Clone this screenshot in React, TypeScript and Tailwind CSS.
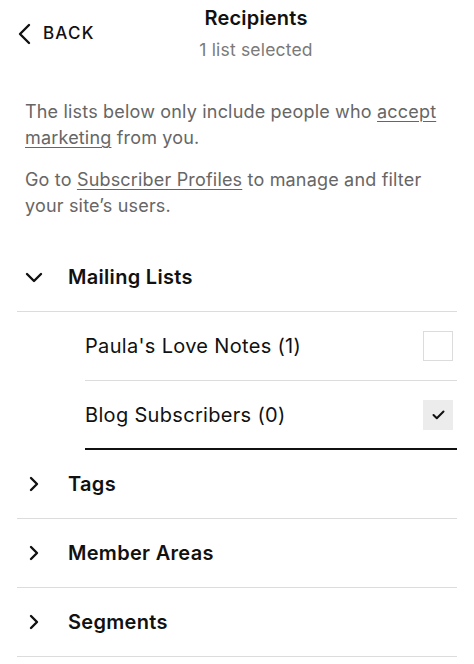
import { useState } from "react";

type Section = { title: string; open?: boolean };

const sections: Section[] = [
  { title: "Mailing Lists", open: true },
  { title: "Tags" },
  { title: "Member Areas" },
  { title: "Segments" },
];

const initialLists = [
  { name: "Paula's Love Notes (1)", checked: false },
  { name: "Blog Subscribers (0)", checked: true },
];

function Chevron({ dir }: { dir: "left" | "right" | "down" }) {
  if (dir === "left") {
    return (
      <svg width="15" height="22" viewBox="0 0 15 22" fill="none" stroke="#111" strokeWidth="2.4" strokeLinecap="round" strokeLinejoin="round">
        <path d="M12 2 L3 11 L12 20" />
      </svg>
    );
  }
  if (dir === "down") {
    return (
      <svg width="18" height="11" viewBox="0 0 18 11" fill="none" stroke="#111" strokeWidth="2.4" strokeLinecap="round" strokeLinejoin="round">
        <path d="M2 2 L9 9 L16 2" />
      </svg>
    );
  }
  return (
    <svg width="12" height="16" viewBox="0 0 12 16" fill="none" stroke="#111" strokeWidth="2.4" strokeLinecap="round" strokeLinejoin="round">
      <path d="M3 2 L9 8 L3 14" />
    </svg>
  );
}

export default function App() {
  const [lists, setLists] = useState(initialLists);

  return (
    <div className="min-h-screen w-[474px] bg-white font-['Inter',sans-serif] text-[#111]">
      {/* Header */}
      <header className="relative h-[72px]">
        <button className="absolute left-[17px] top-[21px] flex items-center gap-[11px]">
          <Chevron dir="left" />
          <span className="text-[17px] font-medium tracking-[0.07em]">BACK</span>
        </button>
        <div className="flex flex-col items-center pl-[38px] pt-[5px]">
          <h1 className="text-[20px] font-semibold leading-[26px] tracking-[0.01em]">Recipients</h1>
          <p className="mt-[7px] text-[17.5px] leading-[24px] tracking-[0.01em] text-[#7a7a7a]">1 list selected</p>
        </div>
      </header>

      {/* Intro copy */}
      <div className="px-[25px] pt-[27px] text-[18px] leading-[26px] tracking-[0.01em] text-[#666]">
        <p>
          The lists below only include people who <span className="underline underline-offset-[3px] decoration-1">accept marketing</span> from you.
        </p>
        <p className="mt-[16px]">
          Go to <span className="underline underline-offset-[3px] decoration-1">Subscriber Profiles</span> to manage and filter your site’s users.
        </p>
      </div>

      {/* Recipient groups */}
      <div className="mx-[17px] mt-[24px]">
        {sections.map((s) => (
          <div key={s.title}>
            <div className="flex h-[69px] items-center border-b border-[#dcdcdc]">
              <div className="flex w-[34px] justify-center">
                <Chevron dir={s.open ? "down" : "right"} />
              </div>
              <span className="ml-[17px] text-[20px] font-semibold tracking-[0.015em]">{s.title}</span>
            </div>
            {s.open && (
              <div className="pl-[68px]">
                {lists.map((l, i) => (
                  <div
                    key={l.name}
                    className={`flex h-[69px] items-center justify-between pr-[4px] ${
                      i === lists.length - 1 ? "border-b-2 border-[#111]" : "border-b border-[#dcdcdc]"
                    }`}
                  >
                    <span className="text-[20px] tracking-[0.016em]">{l.name}</span>
                    <button
                      onClick={() =>
                        setLists(lists.map((x, j) => (j === i ? { ...x, checked: !x.checked } : x)))
                      }
                      className={`flex h-[30px] w-[30px] items-center justify-center ${
                        l.checked ? "bg-[#ececec]" : "border border-[#dcdcdc] bg-white"
                      }`}
                    >
                      {l.checked && (
                        <svg width="13" height="10" viewBox="0 0 13 10" fill="none" stroke="#111" strokeWidth="2" strokeLinecap="round" strokeLinejoin="round">
                          <path d="M1.5 5 L4.8 8.3 L11.5 1.5" />
                        </svg>
                      )}
                    </button>
                  </div>
                ))}
              </div>
            )}
          </div>
        ))}
      </div>
    </div>
  );
}
